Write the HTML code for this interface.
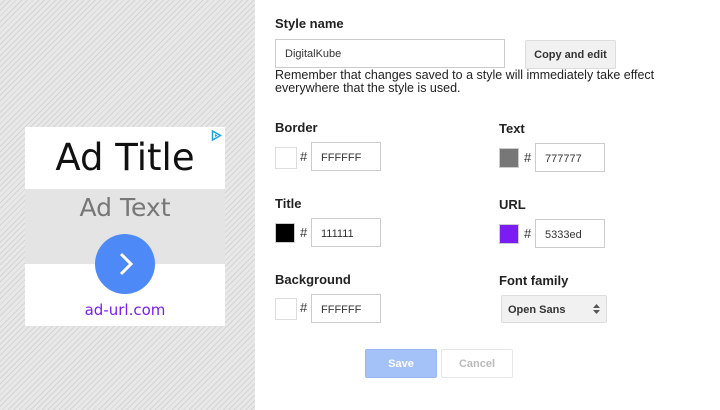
<!DOCTYPE html>
<html><head><style>
body{margin:0;width:720px;height:410px;position:relative;overflow:hidden;font-family:"Liberation Sans",Arial,sans-serif;background:#fff;color:#222}
.left{position:absolute;left:0;top:0;width:255px;height:410px;background:repeating-linear-gradient(135deg,#e8e8e8 0 3px,#d4d4d4 3px 4px)}
.ad{position:absolute;left:25px;top:127px;width:200px;height:199px;background:#fff;overflow:hidden}
.a{position:absolute;font-family:"DejaVu Sans",sans-serif}
.lbl{position:absolute;font-size:13px;font-weight:bold;color:#222}
.sw{position:absolute;width:20px;height:20px;border:1px solid #ddd;box-sizing:border-box}
.hash{position:absolute;font-size:13px;color:#333}
.inp{position:absolute;width:70px;height:29px;border:1px solid #ccc;box-sizing:border-box;font-size:11px;color:#333;padding:9px 0 0 9px}
.btn{position:absolute;font-size:11px;font-weight:bold;text-align:center;box-sizing:border-box;border-radius:2px}
</style></head><body>
<div class="left">
<div class="ad">
<div class="a" style="left:0;top:0;width:200px;text-align:center;font-size:37px;line-height:62px;color:#111">Ad Title</div>
<svg style="position:absolute;left:186px;top:3px" width="11" height="11" viewBox="0 0 11 11"><path d="M1.5 1v9l8-4.5z" fill="none" stroke="#1aa3e0" stroke-width="1.5"/><path d="M4 4v3l2.5-1.5z" fill="#1aa3e0"/></svg>
<div style="position:absolute;left:0;top:62px;width:200px;height:75px;background:#e4e4e4"></div>
<div class="a" style="left:0;top:66px;width:200px;text-align:center;font-size:25px;color:#777">Ad Text</div>
<div style="position:absolute;left:70px;top:107px;width:60px;height:60px;border-radius:50%;background:#4d8af7"></div>
<svg style="position:absolute;left:70px;top:107px" width="60" height="60"><path d="M26 20l10 10-10 10" fill="none" stroke="#fff" stroke-width="3"/></svg>
<div class="a" style="left:0;top:174px;width:200px;text-align:center;font-size:15px;color:#7b1df2">ad-url.com</div>
</div>
</div>
<div class="lbl" style="left:275px;top:16px">Style name</div>
<div style="position:absolute;left:275px;top:39px;width:230px;height:29px;border:1px solid #ccc;box-sizing:border-box;font-size:11px;color:#333;padding:8px 0 0 9px">DigitalKube</div>
<div class="btn" style="left:525px;top:40px;width:91px;height:29px;background:#f1f1f1;border:1px solid #ddd;color:#333;padding-top:8px">Copy and edit</div>
<div style="position:absolute;left:275px;top:69px;font-size:12.5px;line-height:13px;color:#222">Remember that changes saved to a style will immediately take effect<br>everywhere that the style is used.</div>

<div class="lbl" style="left:275px;top:120px">Border</div>
<div class="sw" style="left:275px;top:147px;height:22px;width:22px"></div><div class="hash" style="left:300px;top:149px">#</div>
<div class="inp" style="left:311px;top:142px">FFFFFF</div>
<div class="lbl" style="left:499px;top:121px">Text</div>
<div class="sw" style="left:499px;top:148px;background:#777;border-color:#ccc"></div><div class="hash" style="left:524px;top:150px">#</div>
<div class="inp" style="left:535px;top:143px">777777</div>

<div class="lbl" style="left:275px;top:196px">Title</div>
<div class="sw" style="left:275px;top:223px;background:#000;border-color:#ccc"></div><div class="hash" style="left:300px;top:225px">#</div>
<div class="inp" style="left:311px;top:218px">111111</div>
<div class="lbl" style="left:499px;top:197px">URL</div>
<div class="sw" style="left:499px;top:224px;background:#7b1df2;border-color:#ccc"></div><div class="hash" style="left:524px;top:226px">#</div>
<div class="inp" style="left:535px;top:219px">5333ed</div>

<div class="lbl" style="left:275px;top:272px">Background</div>
<div class="sw" style="left:275px;top:298px;width:22px;height:22px"></div><div class="hash" style="left:300px;top:300px">#</div>
<div class="inp" style="left:311px;top:294px">FFFFFF</div>
<div class="lbl" style="left:499px;top:273px">Font family</div>
<div class="btn" style="left:501px;top:295px;width:106px;height:28px;background:#f1f1f1;border:1px solid #ddd;color:#333;text-align:left;padding:8px 0 0 6px">Open Sans</div>
<svg style="position:absolute;left:592px;top:303px" width="9" height="12"><path d="M1 5l3.5-4 3.5 4zM1 7l3.5 4 3.5-4z" fill="#555"/></svg>

<div class="btn" style="left:365px;top:349px;width:72px;height:29px;background:#a4c2f7;border:1px solid #9bb9f0;color:#fff;padding-top:8px">Save</div>
<div class="btn" style="left:441px;top:349px;width:72px;height:29px;background:#fff;border:1px solid #e6e6e6;color:#bbb;padding-top:8px">Cancel</div>
</body></html>
